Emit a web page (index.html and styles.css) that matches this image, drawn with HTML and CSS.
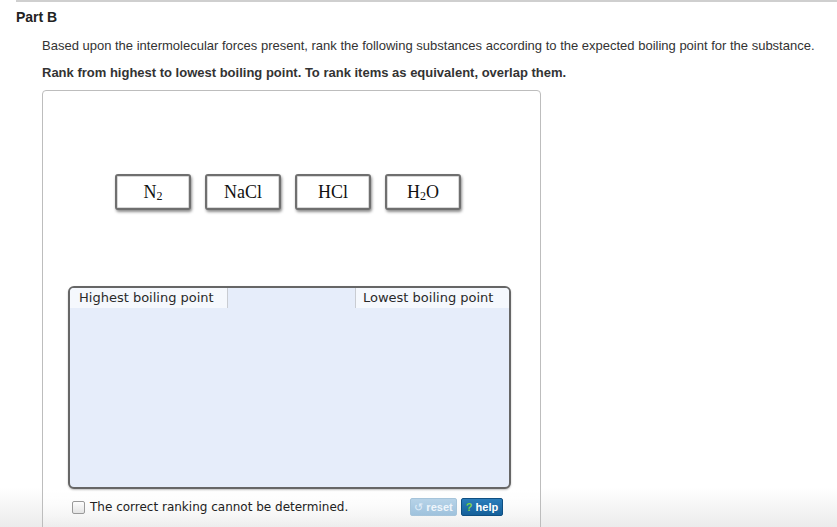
FILE: index.html
```html
<!DOCTYPE html>
<html lang="en">
<head>
    <meta charset="UTF-8">
    <title>Part B</title>
    <link rel="stylesheet" href="styles.css">
</head>
<body>
    <div class="top-rule"></div>
    <div class="part-title">Part B</div>
    <div class="question">
        <p class="prompt">Based upon the intermolecular forces present, rank the following substances according to the expected boiling point for the substance.</p>
        <p class="instructions">Rank from highest to lowest boiling point. To rank items as equivalent, overlap them.</p>

        <div class="workspace">
            <div class="tiles">
                <div class="tile">N<sub>2</sub></div>
                <div class="tile">NaCl</div>
                <div class="tile">HCl</div>
                <div class="tile">H<sub>2</sub>O</div>
            </div>

            <div class="ranking">
                <div class="ranking-head">
                    <span class="end-label high">Highest boiling point</span>
                    <span class="end-label low">Lowest boiling point</span>
                </div>
            </div>

            <div class="ranking-foot">
                <label class="cannot">
                    <span class="checkbox"></span>
                    The correct ranking cannot be determined.
                </label>
                <div class="tools">
                    <span class="btn reset"><span class="reset-icon">&#8634;</span> reset</span>
                    <span class="btn help"><span class="help-icon">?</span> help</span>
                </div>
            </div>
        </div>
    </div>
</body>
</html>
```

FILE: styles.css
```css
* {
    margin: 0;
    box-sizing: border-box;
}

body {
    font-family: "Liberation Sans", Arial, sans-serif;
    color: #222;
    height: 527px;
    overflow: hidden;
    background: linear-gradient(to bottom, #fff 0, #fff 488px, #ebebeb 527px);
}

.top-rule {
    margin-left: 16px;
    height: 2px;
    background-color: #cfcfcf;
}

.part-title {
    margin: 7px 0 0 16px;
    font-size: 14px;
    font-weight: bold;
    line-height: 17px;
}

.question {
    padding-left: 42px;
}

.prompt {
    margin-top: 12px;
    font-size: 13px;
    line-height: 16px;
    color: #333;
}

.instructions {
    margin-top: 11px;
    font-size: 13px;
    font-weight: bold;
    line-height: 16px;
    color: #333;
}

.workspace {
    margin-top: 9px;
    width: 499px;
    height: 460px;
    border: 1px solid #bdbdbd;
    border-radius: 4px;
    background: linear-gradient(to bottom, rgba(255,255,255,1) 0, rgba(255,255,255,1) 395px, rgba(255,255,255,0) 440px);
}

.tiles {
    display: flex;
    justify-content: center;
    gap: 14px;
    margin-top: 83px;
    padding-right: 7px;
}

.tile {
    width: 76px;
    height: 36px;
    display: flex;
    align-items: center;
    justify-content: center;
    font-family: "Liberation Serif", "Times New Roman", serif;
    font-size: 18px;
    line-height: 20px;
    color: #111;
    background: #fff;
    border: 2px solid #6f6f6f;
    border-radius: 3px;
    box-shadow: 1px 2px 3px rgba(0,0,0,0.45), inset 0 0 0 1px #d8d8d8;
}

.tile sub {
    font-size: 12px;
    line-height: 0;
    position: relative;
    top: 4px;
    vertical-align: baseline;
}

.ranking {
    margin: 76px 0 0 25px;
    width: 443px;
    height: 203px;
    border: 2px solid #666;
    border-radius: 6px;
    background-color: #e6edfa;
    box-shadow: 0 1px 2px rgba(0,0,0,0.25);
}

.ranking-head {
    display: flex;
    justify-content: space-between;
}

.end-label {
    height: 20px;
    padding: 0 8px 0 9px;
    font-family: "DejaVu Sans", Verdana, sans-serif;
    font-size: 13px;
    line-height: 20px;
    color: #2a2a2a;
    background-color: #f5f8fd;
}

.end-label.high {
    width: 158px;
    border-right: 1px solid #c9ccd2;
    border-top-left-radius: 4px;
}

.end-label.low {
    width: 154px;
    padding-left: 7px;
    border-left: 1px solid #c9ccd2;
    border-top-right-radius: 4px;
}

.ranking-foot {
    display: flex;
    align-items: center;
    justify-content: space-between;
    margin: 9px 0 0 29px;
    width: 431px;
}

.cannot {
    display: flex;
    align-items: center;
    gap: 5px;
    font-family: "DejaVu Sans", Verdana, sans-serif;
    font-size: 12px;
    color: #222;
}

.checkbox {
    width: 13px;
    height: 13px;
    border: 1px solid #9a9a9a;
    border-radius: 2px;
    background: linear-gradient(to bottom, #fdfdfd, #e4e4e4);
}

.tools {
    display: flex;
    gap: 4px;
}

.btn {
    height: 18px;
    padding: 0 3px;
    font-family: "Liberation Sans", Arial, sans-serif;
    font-size: 11px;
    font-weight: bold;
    line-height: 16px;
    color: #fff;
    white-space: nowrap;
    border-radius: 2px;
    text-align: center;
}

.btn.reset {
    width: 47px;
    background: linear-gradient(to bottom, #b7d3e8, #9fc2dd);
    border: 1px solid #a6c4da;
    color: #eef5fb;
}

.reset-icon {
    font-weight: normal;
    color: #e3effa;
}

.btn.help {
    width: 42px;
    background: linear-gradient(to bottom, #2a7dbb, #15609a);
    border: 1px solid #0f4f82;
}

.help-icon {
    color: #7fd34a;
}
```
